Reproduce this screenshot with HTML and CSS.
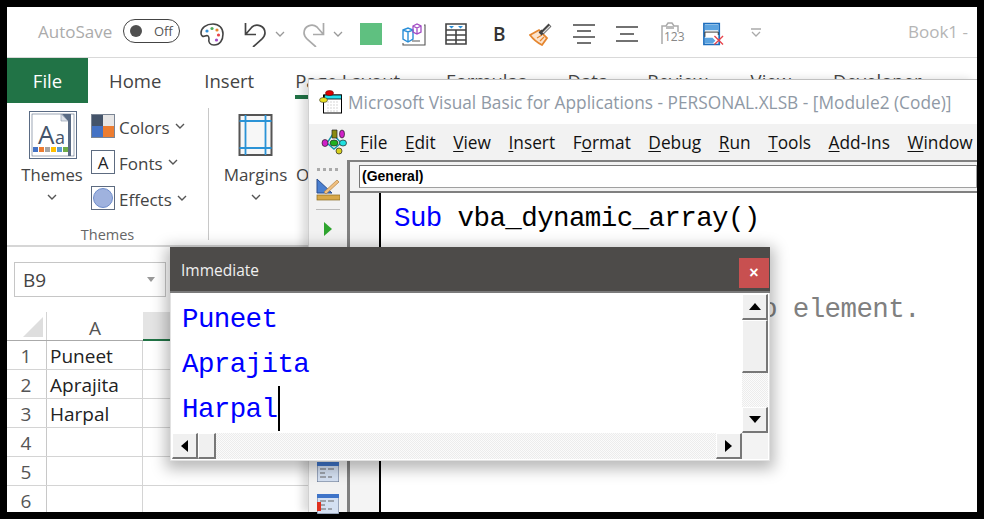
FILE: index.html
```html
<!DOCTYPE html>
<html lang="en">
<head>
<meta charset="utf-8">
<title>Immediate window</title>
<link rel="stylesheet" href="styles.css">
</head>
<body>
<div class="screen">
  <div class="excel">
    <div class="qat">
      <span class="autosave">AutoSave</span>
      <span class="toggle"><i class="knob"></i><span class="toggle-text">Off</span></span>
      <svg class="ic palette" viewBox="0 0 24 23"><path d="M13 1C6 1 1 5 1 10c0 3 2 4 4 3 3-1 4 0 4 3-1 3 1 6 5 6 6 0 9-5 9-11 0-6-4-10-10-10Z" fill="none" stroke="#444" stroke-width="1.600"/><circle cx="7" cy="8" r="1.600" fill="#2f8fd8"/><circle cx="12" cy="5.500" r="1.600" fill="#4fae5e"/><circle cx="17" cy="7" r="1.600" fill="#e8862f"/><circle cx="18.500" cy="12" r="1.600" fill="#e8434a"/><circle cx="16.500" cy="17" r="1.600" fill="#a24cc4"/></svg>
      <svg class="ic undo" viewBox="0 0 23 25"><path d="M1.500 1v11.500H12M1.500 12.500L8 5c5-4 13-1 13 6 0 3-2 5-3.500 6.500L9 25" fill="none" stroke="#444" stroke-width="1.700"/></svg>
      <svg class="chev c1" viewBox="0 0 10 6"><path d="M1 1l4 4 4-4" fill="none" stroke="#999" stroke-width="1.300"/></svg>
      <svg class="ic redo" viewBox="0 0 23 25"><path d="M21.500 1v11.500H11M21.500 12.500L15 5C10 1 2 4 2 11c0 3 2 5 3.500 6.500L14 25" fill="none" stroke="#aaa" stroke-width="1.700"/></svg>
      <svg class="chev c2" viewBox="0 0 10 6"><path d="M1 1l4 4 4-4" fill="none" stroke="#999" stroke-width="1.300"/></svg>
      <span class="green-box"></span>
      <svg class="ic cubes" viewBox="0 0 24 23"><path d="M1 7l5-2 5 2v9l-5 3-5-3ZM1 7l5 2 5-2M6 9v10" fill="none" stroke="#2a8fd8" stroke-width="1.400"/><path d="M11 3l4-2 4 2v6l-4 2-4-2ZM11 3l4 2 4-2M15 5v6" fill="none" stroke="#a24cc4" stroke-width="1.300"/><path d="M22 2h1v20H1v-2M10 18h8" fill="none" stroke="#555" stroke-width="1.100"/></svg>
      <svg class="ic table" viewBox="0 0 22 22"><path d="M1 1h20v20H1ZM1 7h20M1 12h20M1 17h20M11 7v14" fill="none" stroke="#444" stroke-width="1.600"/><path d="M4 3h5l-2.500 2.500ZM13 3h5l-2.500 2.500Z" fill="#2a8fd8"/></svg>
      <span class="bold">B</span>
      <svg class="ic brush" viewBox="0 0 24 23"><path d="M1 12l9-5 8 8-5 7c-4-2-9-6-12-10Z" fill="#fbe3cd" stroke="#e5862f" stroke-width="1.800"/><path d="M8 15l5-3M11 18l4-4" stroke="#e5862f" stroke-width="1.200"/><path d="M11 8l3 3M13 10l8-8" stroke="#444" stroke-width="4"/><path d="M14 10l7-7" stroke="#ddd" stroke-width="1.500"/></svg>
      <svg class="ic lines" viewBox="0 0 22 20"><path d="M0 1h22M4 7h14M0 13h22M4 19h14" stroke="#444" stroke-width="1.500"/></svg>
      <svg class="ic lines2" viewBox="0 0 22 16"><path d="M0 1h22M4 8h14M0 15h22" stroke="#444" stroke-width="1.500"/></svg>
      <span class="paste"><svg class="paste-ic" viewBox="0 0 18 22"><path d="M1 22V4h4l2-3h4l2 3h4v6" fill="none" stroke="#aaa" stroke-width="1.500"/><path d="M5 4h8v3H5Z" fill="#bbb"/></svg><span class="paste-num">123</span></span>
      <svg class="ic rowx" viewBox="0 0 22 24"><path d="M1 1h16v22H1Z" fill="#fff" stroke="#1c6dbd" stroke-width="1.800"/><path d="M2 2h14v6H2ZM2 16h8l3 3-3 3H2Z" fill="#5ba3e0"/><path d="M2 10h14" stroke="#333"/><path d="M2 10v5M16 10v3" stroke="#333"/><path d="M12 14l9 9M21 14l-9 9" stroke="#e8434a" stroke-width="1.400"/></svg>
      <svg class="more" viewBox="0 0 12 10"><path d="M1 1h10M2 4l4 4 4-4" fill="none" stroke="#aaa" stroke-width="1.300"/></svg>
      <span class="book">Book1 -</span>
    </div>
    <div class="tabs">
      <span class="tab file">File</span>
      <span class="tab home">Home</span>
      <span class="tab insert">Insert</span>
      <span class="tab active">Page Layout</span>
      <span class="tab formulas">Formulas</span>
      <span class="tab data">Data</span>
      <span class="tab review">Review</span>
      <span class="tab view">View</span>
      <span class="tab dev">Developer</span>
    </div>
    <div class="ribbon">
      <div class="group themes-group">
        <div class="group-body">
          <div class="themes-btn">
            <svg class="themes-ic" viewBox="0 0 48 48"><rect x=".5" y=".5" width="47" height="47" fill="#fff" stroke="#5a6b84"/><rect x="3" y="3" width="42" height="42" fill="#fff" stroke="#5a6b84" stroke-width=".6"/><path d="M33 3h9v42h-3V10Z" fill="#5a6b84"/><path d="M32 3l7 7h-7Z" fill="#dfe3ea" stroke="#8895a8" stroke-width=".6"/><text class="aa-big" x="9" y="33">A</text><text class="aa-small" x="26" y="33">a</text><rect x="4" y="36" width="5" height="5" fill="#4472c4"/><rect x="10" y="36" width="5" height="5" fill="#ed7d31"/><rect x="16" y="36" width="5" height="5" fill="#a5a5a5"/><rect x="22" y="36" width="5" height="5" fill="#ffc000"/><rect x="28" y="36" width="5" height="5" fill="#5b9bd5"/><rect x="34" y="36" width="5" height="5" fill="#70ad47"/></svg>
            <span class="big-label">Themes</span>
            <svg class="chev big-chev" viewBox="0 0 10 6"><path d="M1 1l4 4 4-4" fill="none" stroke="#555" stroke-width="1.400"/></svg>
          </div>
          <div class="theme-list">
            <div class="theme-row"><svg class="swatch" viewBox="0 0 24 24"><rect width="12" height="12" fill="#44546a"/><rect x="12" width="12" height="12" fill="#e7e6e6"/><rect y="12" width="12" height="12" fill="#4472c4"/><rect x="12" y="12" width="12" height="12" fill="#ed7d31"/></svg><span class="row-label">Colors</span><svg class="chev" viewBox="0 0 10 6"><path d="M1 1l4 4 4-4" fill="none" stroke="#555" stroke-width="1.400"/></svg></div>
            <div class="theme-row"><span class="swatch font-swatch">A</span><span class="row-label">Fonts</span><svg class="chev" viewBox="0 0 10 6"><path d="M1 1l4 4 4-4" fill="none" stroke="#555" stroke-width="1.400"/></svg></div>
            <div class="theme-row"><span class="swatch effect-swatch"><i class="ball"></i></span><span class="row-label">Effects</span><svg class="chev" viewBox="0 0 10 6"><path d="M1 1l4 4 4-4" fill="none" stroke="#555" stroke-width="1.400"/></svg></div>
          </div>
        </div>
        <div class="group-label">Themes</div>
      </div>
      <div class="group margins-group">
        <div class="margins-btn">
          <svg class="margins-ic" viewBox="0 0 34 42"><rect x="1" y="1" width="32" height="40" fill="#f7f7f7" stroke="#555" stroke-width="2"/><path d="M7 1v40M27 1v40M1 7h32M1 34h32" stroke="#2b93d6" stroke-width="1.800"/></svg>
          <span class="big-label">Margins</span>
          <svg class="chev big-chev" viewBox="0 0 10 6"><path d="M1 1l4 4 4-4" fill="none" stroke="#555" stroke-width="1.400"/></svg>
        </div>
        <span class="big-label orient">O</span>
      </div>
    </div>
    <div class="formula-row">
      <div class="name-box"><span>B9</span><i class="caret"></i></div>
    </div>
    <div class="grid">
      <div class="g-row head"><span class="corner"><i></i></span><span class="col-a">A</span><span class="col-b"></span></div>
      <div class="g-row"><span class="num">1</span><span class="cell">Puneet</span></div>
      <div class="g-row"><span class="num">2</span><span class="cell">Aprajita</span></div>
      <div class="g-row"><span class="num">3</span><span class="cell">Harpal</span></div>
      <div class="g-row"><span class="num">4</span><span class="cell"></span></div>
      <div class="g-row"><span class="num">5</span><span class="cell"></span></div>
      <div class="g-row"><span class="num">6</span><span class="cell"></span></div>
    </div>
  </div>

  <div class="vba">
    <div class="vba-title">
      <svg class="vba-logo" viewBox="0 0 24 24"><rect x="4" y="5" width="18" height="18" fill="#fff" stroke="#000"/><rect x="5" y="5" width="17" height="4" fill="#22e0f0" stroke="#000" stroke-width=".8"/><path d="M8 12h12M8 15h12M8 18h12M8 21h12" stroke="#aaa" stroke-dasharray="1 2"/><ellipse cx="10" cy="3" rx="4" ry="2.500" fill="#d00" stroke="#600" stroke-width=".6"/><ellipse cx="4" cy="10" rx="4" ry="2.500" fill="#e8e020" stroke="#333" stroke-width=".6"/></svg>
      <span>Microsoft Visual Basic for Applications - PERSONAL.XLSB - [Module2 (Code)]</span>
    </div>
    <div class="vba-menu">
      <i class="grip"></i>
      <svg class="menu-logo" viewBox="0 0 26 26"><path d="M12 5l-6 9 7 6 7-6Z" stroke="#19a" stroke-width="1.400" fill="none"/><path d="M11 1h5v8h-5Z" fill="#8a8a10" stroke="#222" stroke-width=".7"/><ellipse cx="21" cy="5" rx="2.500" ry="4" fill="#d020c8" stroke="#222" stroke-width=".7"/><ellipse cx="4" cy="14" rx="3" ry="3.500" fill="#d020c8" stroke="#222" stroke-width=".7"/><ellipse cx="13" cy="14" rx="4" ry="3" fill="#20b020" stroke="#222" stroke-width=".7"/><ellipse cx="22" cy="14" rx="3.500" ry="3" fill="#20e0e0" stroke="#222" stroke-width=".7"/><circle cx="18" cy="22" r="3" fill="#d8d020" stroke="#222" stroke-width=".7"/></svg>
      <span class="m"><u>F</u>ile</span><span class="m"><u>E</u>dit</span><span class="m"><u>V</u>iew</span><span class="m"><u>I</u>nsert</span><span class="m">F<u>o</u>rmat</span><span class="m"><u>D</u>ebug</span><span class="m"><u>R</u>un</span><span class="m"><u>T</u>ools</span><span class="m"><u>A</u>dd-Ins</span><span class="m"><u>W</u>indow</span>
    </div>
    <div class="vba-body">
      <div class="toolbar">
        <i class="grip-h"></i>
        <svg class="tool-ic" viewBox="0 0 24 24"><path d="M1 2l15 14H1Z" fill="#4a7fd0" stroke="#2a4f90"/><path d="M8 15L21 3l2 2-13 12Z" fill="#f0c080" stroke="#b08040" stroke-width=".7"/><rect x="1" y="18" width="23" height="5" fill="#d8a848" stroke="#8a6a20" stroke-width=".7"/></svg>
        <i class="tool-sep"></i>
        <svg class="run-ic" viewBox="0 0 8 14"><path d="M0 0l8 7-8 7Z" fill="#2fa52f"/></svg>
        <span class="tool-spacer"></span>
        <svg class="form-ic" viewBox="0 0 22 20"><rect width="22" height="20" fill="#d4e0f2" stroke="#5d6b85"/><rect width="22" height="4" fill="#3f74c8"/><path d="M3 7h6M11 7h6M3 11h5M3 15h6M11 15h4" stroke="#666"/></svg>
        <svg class="form-ic last" viewBox="0 0 22 20"><rect width="22" height="20" fill="#d4e0f2" stroke="#5d6b85"/><rect width="22" height="4" fill="#3f74c8"/><path d="M3 7h6M11 7h6M3 11h5M3 15h6M11 15h4" stroke="#666"/><path d="M0 8h4v9H0Z" fill="#e0301e"/></svg>
      </div>
      <div class="pane">
        <div class="dropdown-row"><div class="dropdown">(General)</div></div>
        <div class="code-area">
          <div class="margin-bar"></div>
          <div class="code">
            <div class="code-line"><span class="kw">Sub</span> vba_dynamic_array()</div>
            <div class="comment">o element.</div>
          </div>
        </div>
      </div>
    </div>
  </div>

  <div class="immediate">
    <div class="imm-title"><span>Immediate</span><span class="imm-close">×</span></div>
    <div class="imm-body">
      <div class="imm-main">
        <div class="imm-text">
          <div class="imm-line">Puneet</div>
          <div class="imm-line">Aprajita</div>
          <div class="imm-line">Harpal<i class="cursor"></i></div>
        </div>
        <div class="h-scroll">
          <span class="sbtn"><i class="arr left"></i></span>
          <span class="sbtn thumb-h"></span>
          <span class="track"></span>
          <span class="sbtn"><i class="arr right"></i></span>
        </div>
      </div>
      <div class="v-scroll">
        <span class="sbtn"><i class="arr up"></i></span>
        <span class="sbtn thumb-v"></span>
        <span class="track"></span>
        <span class="sbtn"><i class="arr down"></i></span>
        <span class="corner-box"></span>
      </div>
    </div>
  </div>
</div>
</body>
</html>
```

FILE: styles.css
```css
* { box-sizing: border-box; }
html, body { margin: 0; padding: 0; background: #000; }
body { width: 984px; height: 519px; overflow: hidden; font-family: "Open Sans", "Noto Sans", sans-serif; }
svg { display: block; flex: none; }
i { display: block; }

.screen { position: relative; width: 984px; height: 519px; padding: 7px; background: #000; overflow: hidden; }
.excel { width: 970px; height: 505px; background: #fff; display: flex; flex-direction: column; overflow: hidden; }

/* quick access toolbar */
.qat { height: 51px; flex: none; display: flex; align-items: center; border-bottom: 1px solid #d9d9d9; padding-left: 31px; padding-bottom: 2px; }
.autosave { font-size: 17px; color: #ababab; width: 85px; }
.toggle { width: 57px; height: 24px; border: 1.500px solid #444; border-radius: 12px; display: flex; align-items: center; padding-left: 6px; }
.knob { width: 12px; height: 12px; border-radius: 50%; background: #505050; }
.toggle-text { font-size: 13px; color: #555; margin-left: 12px; }
.ic { margin-top: 6px; }
.palette { width: 24px; height: 23px; margin-left: 20px; }
.undo { width: 23px; height: 25px; margin-left: 20px; }
.chev { width: 10px; height: 6px; }
.c1 { margin-left: 8px; margin-top: 6px; }
.redo { width: 23px; height: 25px; margin-left: 17px; }
.c2 { margin-left: 8px; margin-top: 6px; }
.green-box { width: 22px; height: 22px; background: #5fc080; margin-left: 17px; flex: none; margin-top: 6px; }
.cubes { width: 24px; height: 23px; margin-left: 20px; }
.table { width: 22px; height: 22px; margin-left: 19px; }
.bold { font-size: 19px; font-weight: 600; color: #333; width: 12px; margin-left: 26px; margin-top: 6px; line-height: 22px; }
.brush { width: 24px; height: 23px; margin-left: 24px; }
.lines { width: 22px; height: 20px; margin-left: 20px; }
.lines2 { width: 22px; height: 16px; margin-left: 21px; }
.paste { position: relative; width: 22px; height: 24px; margin-left: 23px; flex: none; margin-top: 6px; }
.paste-ic { width: 18px; height: 22px; }
.paste-num { position: absolute; left: 3px; top: 7px; font-size: 12px; color: #888; line-height: 16px; }
.rowx { width: 21px; height: 24px; margin-left: 20px; }
.more { width: 12px; height: 10px; margin-left: 26px; margin-top: 4px; }
.book { font-size: 17px; color: #b5b5b5; margin-left: 146px; white-space: nowrap; }

/* tabs */
.tabs { height: 46px; flex: none; display: flex; align-items: center; padding-bottom: 2px; font-size: 18.500px; color: #444; }
.tab { white-space: nowrap; }
.file { width: 81px; height: 45px; background: #217346; color: #fff; text-align: center; line-height: 45px; align-self: flex-start; }
.home { margin-left: 21px; }
.insert { margin-left: 43px; }
.active { margin-left: 41px; position: relative; }
.active::after { content: ""; position: absolute; left: 0; top: 27px; width: 20px; height: 4px; background: #217346; }
.formulas { margin-left: 46px; }
.data { margin-left: 41px; }
.review { margin-left: 39px; }
.view { margin-left: 43px; }
.dev { margin-left: 42px; }

/* ribbon */
.ribbon { height: 143px; flex: none; display: flex; border-bottom: 2px solid #d6d6d6; }
.group { display: flex; flex-direction: column; }
.themes-group { width: 202px; border-right: 1px solid #c8c8c8; height: 132px; margin-top: 4px; }
.group-body { flex: 1; display: flex; min-height: 0; }
.themes-btn { width: 84px; display: flex; flex-direction: column; align-items: center; padding-left: 8px; }
.themes-ic { width: 48px; height: 48px; margin-top: 3px; }
.aa-big { font: 26px "Open Sans", sans-serif; fill: #44546a; }
.aa-small { font: 18px "Open Sans", sans-serif; fill: #44546a; }
.big-label { font-size: 17px; color: #444; line-height: 22px; }
.themes-btn .big-label { margin-top: 5px; margin-left: -2px; font-size: 16.700px; }
.big-chev { margin-top: 8px; }
.themes-btn .big-chev { margin-left: -2px; }
.theme-list { display: flex; flex-direction: column; gap: 12px; padding-top: 6px; }
.theme-row { display: flex; align-items: center; height: 24px; font-size: 17px; color: #444; }
.swatch { width: 24px; height: 24px; flex: none; border: 1px solid #7a8594; display: flex; align-items: center; justify-content: center; }
.row-label { margin-left: 4px; margin-right: 5px; padding-top: 2px; }
.font-swatch { background: #fff; font-size: 17px; color: #222; line-height: 1; border-color: #5d6b80; }
.effect-swatch { border-color: #5d6b80; }
.ball { width: 20px; height: 20px; border-radius: 50%; background: #9fb2de; border: 1px solid #6d8ccb; }
.group-label { height: 15px; text-align: center; font-size: 14.500px; color: #666; line-height: 20px; white-space: nowrap; }
.margins-group { flex-direction: row; margin-left: 14px; padding-top: 10px; }
.margins-btn { display: flex; flex-direction: column; align-items: center; width: 65px; }
.margins-ic { width: 35px; height: 42px; }
.margins-btn .big-label { margin-top: 8px; }
.orient { margin-left: 8px; margin-top: 50px; }

/* formula bar + grid */
.formula-row { height: 65px; flex: none; padding: 15px 0 0 7px; }
.name-box { width: 152px; height: 35px; border: 1px solid #c6c6c6; display: flex; align-items: center; justify-content: space-between; padding: 0 10px 0 8px; font-size: 19px; color: #444; }
.caret { border: 4px solid transparent; border-top: 5px solid #999; border-bottom: 0; }
.grid { flex: 1; font-size: 19px; }
.g-row { height: 29px; display: flex; border-bottom: 1px solid #d4d4d4; align-items: stretch; }
.g-row span { display: flex; align-items: center; }
.num { width: 40px; color: #555; justify-content: center; padding: 2px 1px 0 0; border-right: 1px solid #c8c8c8; flex: none; }
.cell { width: 96px; padding: 2px 0 0 3px; border-right: 1px solid #d4d4d4; color: #222; flex: none; }
.head { border-bottom: 1px solid #aaa; }
.corner { width: 40px; border-right: 1px solid #d4d4d4; justify-content: flex-end; padding: 0 3px 3px 0; align-items: flex-end !important; }
.corner i { width: 0; height: 0; border-left: 20px solid transparent; border-bottom: 20px solid #dedede; }
.col-a { width: 96px; justify-content: center; color: #555; padding-top: 4px; }
.col-b { width: 180px; background: #e4e4e4; border-bottom: 2px solid #217346; height: 29px; }

/* VBA window */
.vba { position: absolute; left: 308px; top: 79px; width: 669px; height: 433px; background: #fff; border-top: 1px solid #c0c0c0; border-left: 1px solid #d0d0d0; box-shadow: -6px 0 8px rgba(0,0,0,.14); display: flex; flex-direction: column; }
.vba-title { height: 44px; flex: none; display: flex; align-items: center; padding-left: 10px; font-size: 17.300px; color: #8f99a5; white-space: nowrap; overflow: hidden; }
.vba-logo { width: 25px; height: 24px; margin-right: 4px; }
.vba-menu { height: 36px; flex: none; display: flex; align-items: center; background: #f2f2f2; font-size: 17.300px; color: #111; white-space: nowrap; overflow: hidden; }
.grip { width: 3px; height: 22px; margin-left: 8px; background: repeating-linear-gradient(#aaa 0 3px, transparent 3px 6px); }
.menu-logo { width: 26px; height: 26px; margin-left: 4px; margin-right: 13px; }
.m { margin-right: 17.550px; }
.m u { text-underline-offset: 2px; }
.vba-body { flex: 1; display: flex; min-height: 0; }
.toolbar { width: 38px; flex: none; background: #f2f2f2; display: flex; flex-direction: column; align-items: center; padding-top: 8px; }
.grip-h { width: 22px; height: 3px; background: repeating-linear-gradient(90deg, #aaa 0 3px, transparent 3px 6px); }
.tool-ic { width: 24px; height: 24px; margin-top: 6px; }
.tool-sep { width: 24px; height: 1px; background: #bbb; margin-top: 8px; }
.run-ic { width: 8px; height: 14px; margin-top: 12px; }
.tool-spacer { flex: 1; }
.form-ic { width: 22px; height: 20px; margin-bottom: 12px; }
.form-ic.last { margin-bottom: -2px; }
.pane { flex: 1; display: flex; flex-direction: column; border-left: 3px solid #808080; border-top: 2px solid #808080; min-width: 0; background: #fff; overflow: hidden; }
.dropdown-row { height: 31px; flex: none; padding: 3px 0 0 9px; background: #f2f2f2; border-bottom: 2px solid #808080; }
.dropdown { height: 23px; background: #fff; border: 1px solid #a0a0a0; border-top-color: #777; border-left-color: #777; font: 700 14px/21px "Liberation Sans", sans-serif; padding-left: 2px; color: #000; }
.code-area { flex: 1; display: flex; }
.margin-bar { width: 31px; flex: none; background: #f4f4f4; border-right: 2px solid #000; }
.code { flex: 1; padding: 8px 0 0 13px; font: 27.500px/36px "Liberation Mono", monospace; letter-spacing: -.6px; color: #000; white-space: nowrap; }
.kw { color: #0000ff; }
.comment { color: #808080; margin-top: 55px; margin-left: 367px; }

/* Immediate window */
.immediate { position: absolute; left: 170px; top: 247px; width: 600px; height: 214px; background: #fff; box-shadow: 0 4px 14px 4px rgba(0,0,0,.28); display: flex; flex-direction: column; }
.imm-title { height: 46px; flex: none; background: #4d4b49; border-bottom: 2px solid #7a7a7a; display: flex; justify-content: space-between; color: #f0f0f0; font-size: 15.500px; padding-left: 11px; line-height: 46px; position: relative; }
.imm-close { position: absolute; right: 1px; top: 11px; width: 30px; height: 30px; background: #c85050; color: #fff; font: 700 16px/29px "Liberation Sans", sans-serif; text-align: center; }
.imm-body { flex: 1; display: flex; border: 1px solid #e2e2e2; border-top: 0; min-height: 0; padding: 1px; }
.imm-main { flex: 1; display: flex; flex-direction: column; min-width: 0; }
.imm-text { flex: 1; padding: 3px 0 0 10px; font: 27.500px/45px "Liberation Mono", monospace; letter-spacing: -.6px; color: #0000ff; }
.imm-line { height: 45px; }
.cursor { display: inline-block; width: 1.500px; height: 45px; background: #000; vertical-align: top; margin-left: 1px; margin-top: -1px; }
.h-scroll { height: 26px; flex: none; display: flex; background: #f3f3f3; }
.v-scroll { width: 26px; flex: none; display: flex; flex-direction: column; background: #f3f3f3; }
.track { flex: 1; background: repeating-conic-gradient(#ececec 0 25%, #fbfbfb 0 50%) 0 0 / 2px 2px; }
.sbtn { width: 26px; height: 26px; flex: none; background: #f0f0f0; border: 1px solid #fff; border-right: 2px solid #777; border-bottom: 2px solid #777; display: flex; align-items: center; justify-content: center; }
.thumb-h { width: 18px; }
.thumb-v { height: 53px; }
.corner-box { height: 26px; flex: none; }
.arr { width: 0; height: 0; border: 5px solid transparent; }
.arr.left { border-left: 0; border-right: 7px solid #000; border-top-width: 6px; border-bottom-width: 6px; }
.arr.right { border-right: 0; border-left: 7px solid #000; border-top-width: 6px; border-bottom-width: 6px; }
.arr.up { border-top: 0; border-bottom: 7px solid #000; border-left-width: 6px; border-right-width: 6px; }
.arr.down { border-bottom: 0; border-top: 7px solid #000; border-left-width: 6px; border-right-width: 6px; }
```
